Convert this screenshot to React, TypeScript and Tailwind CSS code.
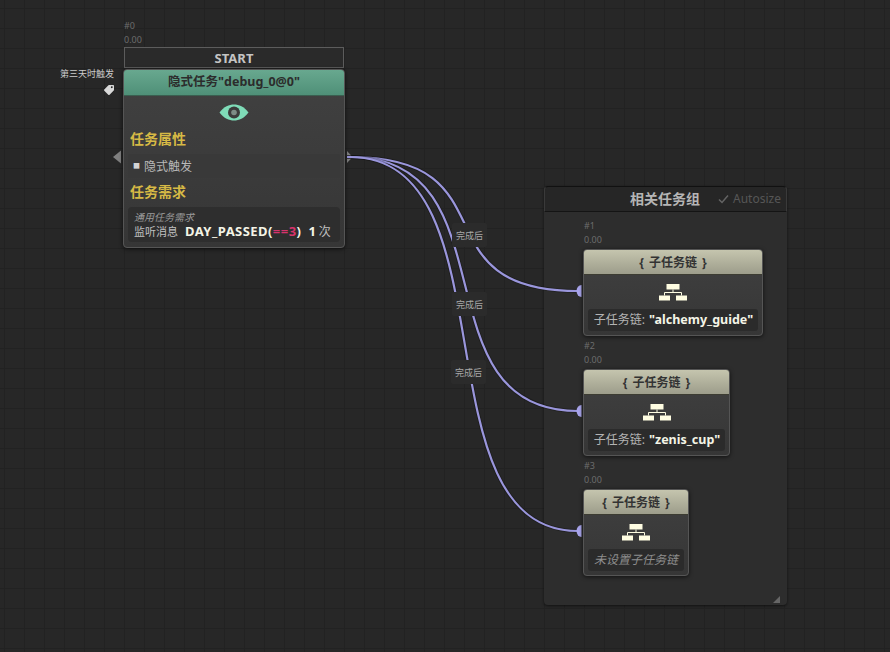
import React from "react";
import { FaTag } from "react-icons/fa";

const FONT = { fontFamily: '"Noto Sans", "Noto Sans CJK SC", sans-serif' };

function Meta({ id }: { id: string }) {
  return (
    <div className="flex flex-col text-[9px] leading-[14px] text-[#6c6c6c]">
      <span>{id}</span>
      <span>0.00</span>
    </div>
  );
}

function Sitemap() {
  return (
    <svg width="28" height="17" viewBox="0 0 28 17" className="block">
      <g fill="#fffde2">
        <rect x="7.500" y="0" width="13" height="5.500" />
        <rect x="0" y="11.500" width="11" height="5" />
        <rect x="17" y="11.500" width="11" height="5" />
      </g>
      <path d="M14 5.500V8.500M5.500 11.500V8.500H22.500V11.500" stroke="#fffde2" strokeWidth="1" fill="none" />
    </svg>
  );
}

function ChainNode({
  id,
  left,
  top,
  width,
  children,
}: {
  id: string;
  left: string;
  top: string;
  width: string;
  children: React.ReactNode;
}) {
  return (
    <div className={`absolute ${left} ${top} flex flex-col gap-[2px]`}>
      <div className="pl-[1px]">
        <Meta id={id} />
      </div>
      <div className={`${width} flex h-[87px] flex-col rounded-[4px] border border-[#555555] bg-gradient-to-b from-[#404040] to-[#363636] shadow-[0_1px_4px_#000000a0]`}>
        <div className="flex h-[25px] shrink-0 items-center justify-center gap-[5px] rounded-t-[3px] border-b border-[#3c3c32] bg-gradient-to-b from-[#c5c5ae] to-[#9d9d8b] pt-[1px] text-[12px] font-bold text-[#333333]">
          <span>{"{"}</span>
          <span>子任务链</span>
          <span>{"}"}</span>
        </div>
        <div className="flex justify-center pt-[9px]">
          <Sitemap />
        </div>
        {children}
      </div>
    </div>
  );
}

function Field({ label, value }: { label: string; value: string }) {
  return (
    <div className="mx-[4px] mt-[8px] flex h-[22px] items-center justify-center whitespace-nowrap rounded-[3px] bg-[#2b2b2b] pl-[1px] text-[12px] text-[#b4b4b4]">
      <span>{label}</span>
      <span className="ml-[4px] text-[12.500px] font-bold text-[#f4f4e6]">{value}</span>
    </div>
  );
}

const ends = [291, 411, 531];
const edge = (y: number) => `M347 157H350C515 157 415 ${y} 578 ${y}`;

export default function App() {
  return (
    <div
      style={FONT}
      className="relative h-[652px] w-[890px] overflow-hidden bg-[#272727] bg-[linear-gradient(to_right,#222222_1px,transparent_1px),linear-gradient(to_bottom,#222222_1px,transparent_1px)] bg-[size:20px_20px] bg-[position:4px_8px]"
    >
      {/* group */}
      <div className="absolute left-[544px] top-[186px] flex h-[419px] w-[243px] flex-col rounded-[4px] bg-[#2d2d2d] shadow-[0_1px_3px_#00000090]">
        <div className="relative flex h-[26px] shrink-0 items-center rounded-t-[4px] border border-b-[#141414] border-l-[#3a3a3a] border-r-[#3a3a3a] border-t-[#111111] bg-[#262626]">
          <span className="ml-[85px] text-[14px] font-bold leading-none text-[#b5b5b5]">相关任务组</span>
          <svg width="11" height="10" viewBox="0 0 11 10" className="absolute left-[172.500px] top-[7px]">
            <path d="M1 5.500L4 8.500L10 1.500" fill="none" stroke="#646464" strokeWidth="1.500" />
          </svg>
          <span className="absolute left-[188px] top-[4px] text-[12px] leading-[16px] text-[#565656]">Autosize</span>
        </div>
        <div className="absolute bottom-[2px] right-[7px] h-0 w-0 border-b-[7px] border-l-[7px] border-b-[#666666] border-l-transparent" />
      </div>

      {/* edges */}
      <svg width="890" height="652" className="absolute left-0 top-0">
        <path d="M347 151L352.500 157L347 163Z" fill="#808080" />
        <path d="M121 150.500L113 157L121 163.500Z" fill="#808080" />
        {ends.map((y) => (
          <g key={y} fill="none">
            <path d={edge(y)} stroke="#00000040" strokeWidth="4" />
            <path d={edge(y)} stroke="#9a96dc" strokeWidth="2.200" />
          </g>
        ))}
        {ends.map((y) => (
          <path key={y} d={`M581.500 ${y - 6}A5 6 0 0 0 581.500 ${y + 6}Z`} fill="#a9a5ec" />
        ))}
      </svg>

      {/* edge labels */}
      {[
        "top-[223px] left-[452px]",
        "top-[292px] left-[452px]",
        "top-[360px] left-[451px]",
      ].map((c) => (
        <div key={c} className={`absolute ${c} flex h-[24px] w-[35px] items-center justify-center rounded-[2px] bg-[#2b2b2b] pt-[2px] text-[9px] text-[#a8a8a8]`}>
          完成后
        </div>
      ))}

      {/* trigger */}
      <div className="absolute left-[60px] top-[67px] flex w-[54px] flex-col items-end gap-[4px] text-white">
        <span className="whitespace-nowrap text-[9px] leading-[14px] text-[#cccccc]">第三天时触发</span>
        <FaTag className="rotate-90 text-[10px] text-[#d8d8d8]" />
      </div>

      {/* main node */}
      <div className="absolute left-[123px] top-[18px] flex w-[222px] flex-col">
        <div className="ml-[1px] pt-[1px]">
          <Meta id="#0" />
        </div>
        <div className="mx-[1px] h-[21px] border border-[#5c5c5c] bg-[#2a2a2a] text-center text-[13px] font-bold leading-[20px] text-[#c4c4c4]">
          START
        </div>
        <div className="mt-[1px] flex h-[179px] flex-col rounded-[4px] border border-[#555555] bg-gradient-to-b from-[#414141] to-[#363636] shadow-[0_1px_4px_#000000a0]">
          <div className="h-[26px] shrink-0 rounded-t-[3px] border-b border-[#3a5f50] bg-gradient-to-b from-[#68a88f] to-[#4f9078] text-center text-[12.500px] font-bold leading-[24px] text-[#2c2c2c]">
            隐式任务"debug_0@0"
          </div>
          <div className="flex justify-center pt-[8px]">
            <svg width="30" height="17" viewBox="0 0 30 17" className="block">
              <path d="M0.500 8.500C5 2.500 10 0.500 15 0.500S25 2.500 29.500 8.500C25 14.500 20 16.500 15 16.500S5 14.500 0.500 8.500Z" fill="#7fdcb8" />
              <circle cx="15" cy="8.500" r="6" fill="#3b3b3b" />
              <circle cx="15" cy="8.500" r="2.800" fill="#7d8c86" />
            </svg>
          </div>
          <div className="ml-[6px] mt-[8px] text-[14px] font-bold leading-[20px] text-[#d6b945]">任务属性</div>
          <div className="mx-[4px] mt-[5px] flex h-[24px] items-center rounded-[2px] bg-[#393939] pl-[5px] pt-[1px] text-[12px] text-[#b8b8b8]">
            <span className="mr-[4px] text-[7px] text-[#d4d4d4]">■</span>隐式触发
          </div>
          <div className="ml-[6px] mt-[4px] text-[14px] font-bold leading-[20px] text-[#d6b945]">任务需求</div>
          <div className="mx-[4px] mt-[5px] flex h-[35px] flex-col justify-center rounded-[4px] bg-[#2e2e2e] px-[6px] pt-[2px]">
            <span className="text-[10px] italic leading-[12px] text-[#9a9a9a]">通用任务需求</span>
            <div className="flex items-center whitespace-nowrap text-[11px] leading-[17px] text-[#c0c0c0]">
              <span>监听消息</span>
              <span className="ml-[7px] text-[13px] font-bold tracking-[0.45px] text-[#f4f4e6]">
                DAY_PASSED(<span className="text-[#d6336c]">==3</span>)
              </span>
              <span className="ml-[7px] text-[13px] font-bold text-[#f4f4e6]">1</span>
              <span className="ml-[3px] text-[12px]">次</span>
            </div>
          </div>
        </div>
      </div>

      <ChainNode id="#1" left="left-[583px]" top="top-[219px]" width="w-[180px]">
        <Field label="子任务链:" value={'"alchemy_guide"'} />
      </ChainNode>
      <ChainNode id="#2" left="left-[583px]" top="top-[339px]" width="w-[147px]">
        <Field label="子任务链:" value={'"zenis_cup"'} />
      </ChainNode>
      <ChainNode id="#3" left="left-[583px]" top="top-[459px]" width="w-[106px]">
        <div className="mx-[4px] mt-[8px] flex h-[22px] items-center justify-center whitespace-nowrap rounded-[3px] bg-[#2b2b2b] text-[12px] italic text-[#8e8e8e]">
          未设置子任务链
        </div>
      </ChainNode>
    </div>
  );
}
